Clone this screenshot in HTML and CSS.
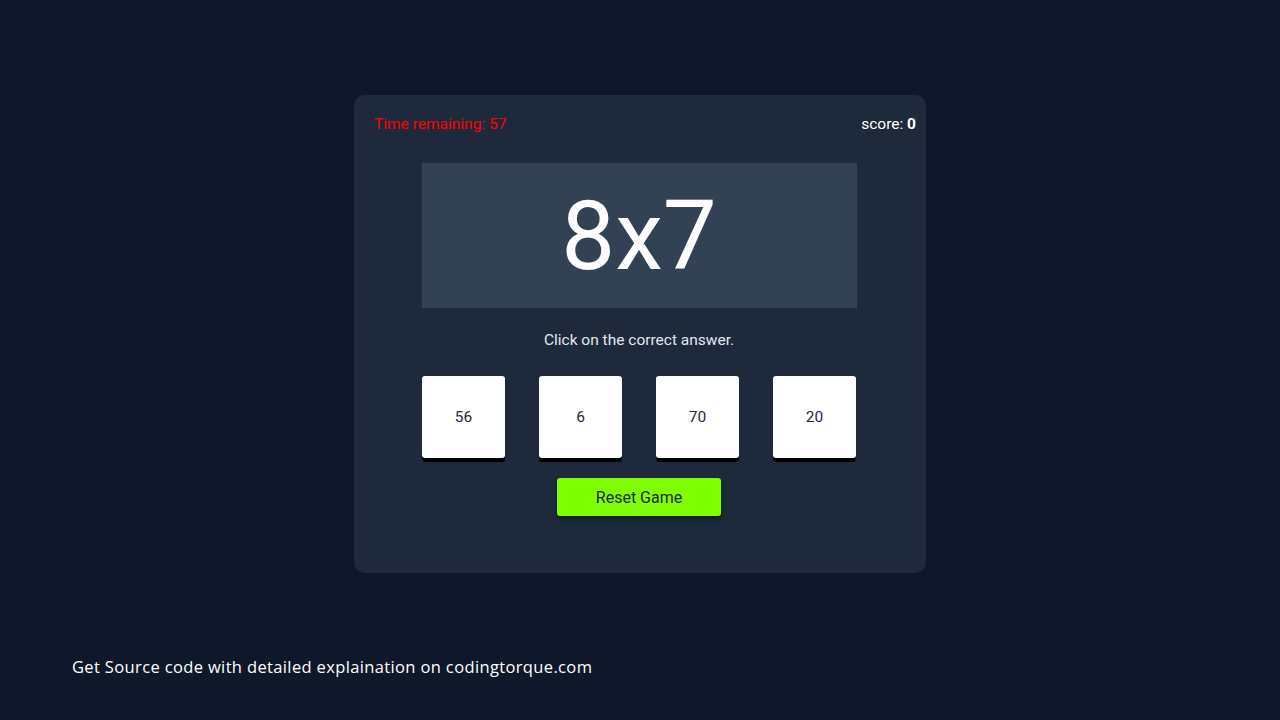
FILE: index.html
```html
<!DOCTYPE html>
<html>
<head>
<meta charset="utf-8">
<link rel="stylesheet" href="styles.css">
</head>
<body>
<div class="page">
  <div class="card">
    <div class="header">
      <span class="time">Time remaining: 57</span>
      <span class="score">score: <b>0</b></span>
    </div>
    <div class="question">8x7</div>
    <p class="instruction">Click on the correct answer.</p>
    <div class="answers">
      <div class="answer">56</div>
      <div class="answer">6</div>
      <div class="answer">70</div>
      <div class="answer">20</div>
    </div>
    <button class="reset">Reset Game</button>
  </div>
  <p class="footer">Get Source code with detailed explaination on codingtorque.com</p>
</div>
</body>
</html>
```
FILE: styles.css
```css
html, body {
  margin: 0;
  padding: 0;
  background: #0f172a;
  width: 1280px;
  height: 720px;
  overflow: hidden;
}
.page {
  display: flex;
  flex-direction: column;
  align-items: center;
  padding-top: 95px;
  font-family: Roboto, "Liberation Sans", sans-serif;
}
.card {
  box-sizing: border-box;
  width: 572px;
  height: 478px;
  background: #1e293b;
  border-radius: 10px;
  display: flex;
  flex-direction: column;
  align-items: center;
  padding-right: 2px;
}
.header {
  box-sizing: border-box;
  width: 100%;
  display: flex;
  justify-content: space-between;
  padding: 20px 8px 0 20px;
  font-size: 15.5px;
  line-height: 19px;
}
.time { color: #ff0000; }
.score { color: #ffffff; }
.score b { font-weight: 700; }
.question {
  margin-top: 29px;
  width: 435px;
  height: 145px;
  background: #334155;
  color: #ffffff;
  font-size: 96px;
  display: flex;
  align-items: center;
  justify-content: center;
  line-height: 1;
}
.instruction {
  margin: 23px 0 0 0;
  color: #e2e8f0;
  font-size: 15.5px;
  line-height: 18px;
}
.answers {
  margin-top: 27px;
  display: flex;
  gap: 34px;
}
.answer {
  width: 83px;
  height: 82px;
  background: #ffffff;
  border-radius: 3px;
  box-shadow: 0 4px 0 #000000;
  display: flex;
  align-items: center;
  justify-content: center;
  font-size: 15.5px;
  color: #1e293b;
}
.reset {
  margin-top: 20px;
  width: 164px;
  height: 38px;
  background: #7fff00;
  border: none;
  border-radius: 3px;
  box-shadow: 0 3px 4px rgba(0,0,0,0.4);
  font-family: Roboto, "Liberation Sans", sans-serif;
  font-size: 16px;
  color: #1e293b;
  padding: 0;
}
.footer {
  align-self: flex-start;
  margin: 84px 0 0 72px;
  color: #ffffff;
  font-family: "Open Sans", Lato, sans-serif;
  font-size: 16.5px;
  line-height: 20px;
  letter-spacing: 0.36px;
}
```
